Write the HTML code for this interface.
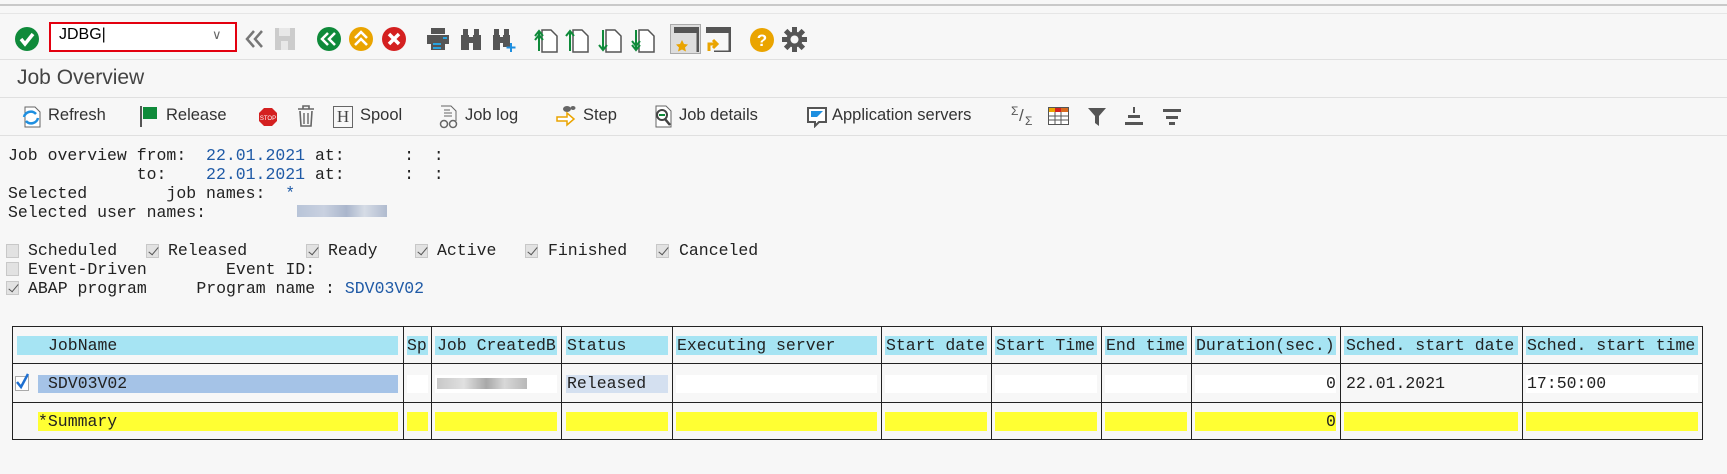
<!DOCTYPE html>
<html><head><meta charset="utf-8"><style>
body{margin:0;width:1727px;height:474px;background:#f7f7f7;position:relative;overflow:hidden;font-family:"Liberation Sans",sans-serif}
.a{position:absolute}
.m{position:absolute;font-family:"Liberation Mono",monospace;font-size:16.5px;color:#222;white-space:pre;line-height:19px}
.b{color:#1f5aa6}
.t{position:absolute;font-size:16.5px;color:#333;top:106px;white-space:nowrap}
.cb{position:absolute;width:13px;height:14px;background:#e2e2e2;border:1px solid #c8c8c8;box-sizing:border-box}
.ck::after{content:"";position:absolute;left:4px;top:0px;width:4px;height:9px;border:solid #555;border-width:0 1.5px 1.5px 0;transform:rotate(40deg)}
.vl{position:absolute;top:326px;width:1px;height:114px;background:#222}
.hl{position:absolute;left:12px;width:1691px;height:1px;background:#222}
.h{position:absolute;top:336px;height:19px;background:#a6e4f3}
.w{position:absolute;top:375px;height:18px;background:#fff}
.y{position:absolute;top:412px;height:19px;background:#ffff33}
</style></head><body>
<div class="a" style="left:0;top:4px;width:1727px;height:2px;background:#c9c9c9"></div>
<div class="a" style="left:0;top:13px;width:1727px;height:1px;background:#e6e6e6"></div>
<!-- toolbar 1 -->
<svg class="a" style="left:14px;top:26px" width="26" height="26"><circle cx="13" cy="13" r="12" fill="#0f8a3a"/><path d="M7 13l4 5 8-10" stroke="#fff" stroke-width="3.5" fill="none"/></svg>
<div class="a" style="left:49px;top:22px;width:184px;height:26px;border:2px solid #e3000f;background:#fff"></div>
<div class="a" style="left:59px;top:26px;font-size:16px;color:#000">JDBG<span style="font-weight:100">|</span></div>
<div class="a" style="left:212px;top:27px;font-size:13px;color:#666">&#8744;</div>
<svg class="a" style="left:244px;top:29px" width="22" height="20"><path d="M10 2l-7 8 7 8M18 2l-7 8 7 8" stroke="#777" stroke-width="2.5" fill="none"/></svg>
<svg class="a" style="left:274px;top:27px" width="22" height="24"><rect x="1" y="1" width="20" height="22" fill="#ccc"/><rect x="5" y="1" width="11" height="8" fill="#e8e8e8"/><rect x="7" y="14" width="7" height="9" fill="#e8e8e8"/></svg>
<svg class="a" style="left:316px;top:26px" width="26" height="26"><circle cx="13" cy="13" r="12" fill="#0f8a3a"/><path d="M12 7l-6 6 6 6M19 7l-6 6 6 6" stroke="#fff" stroke-width="2.5" fill="none"/></svg>
<svg class="a" style="left:348px;top:26px" width="26" height="26"><circle cx="13" cy="13" r="12" fill="#eaa400"/><path d="M7 12l6-6 6 6M7 19l6-6 6 6" stroke="#fff" stroke-width="2.5" fill="none"/></svg>
<svg class="a" style="left:381px;top:26px" width="26" height="26"><circle cx="13" cy="13" r="12" fill="#d42020"/><path d="M8 8l10 10M18 8L8 18" stroke="#fff" stroke-width="3.5"/></svg>
<svg class="a" style="left:426px;top:27px" width="24" height="24"><rect x="5" y="1" width="14" height="6" fill="#555"/><rect x="1" y="8" width="22" height="9" fill="#555"/><rect x="5" y="14" width="14" height="9" fill="#555"/><rect x="7" y="16" width="8" height="2" fill="#29a3e0"/><rect x="7" y="20" width="8" height="2" fill="#29a3e0"/><rect x="17" y="10" width="4" height="2" fill="#29a3e0"/></svg>
<svg class="a" style="left:459px;top:27px" width="24" height="24"><path d="M2 8h8v15H2zM14 8h8v15h-8zM4 2h5v6H4zM15 2h5v6h-5zM9 10h6v6H9z" fill="#555"/></svg>
<svg class="a" style="left:491px;top:27px" width="26" height="26"><path d="M2 8h7v15H2zM12 8h7v12h-7zM3 2h5v6H3zM13 2h5v6h-5zM8 10h5v6H8z" fill="#555"/><path d="M20 16v9M15.5 20.5h9" stroke="#1e8fe0" stroke-width="2"/></svg>
<svg class="a" style="left:534px;top:27px" width="25" height="26"><path d="M8 3h9l6 6v16H8z" fill="#fff" stroke="#555" stroke-width="1.5"/><path d="M5 24V5M1 9l4-5 4 5M1 13l4-5 4 5" stroke="#0f8a3a" stroke-width="2" fill="none"/></svg>
<svg class="a" style="left:565px;top:27px" width="25" height="26"><path d="M8 3h9l6 6v16H8z" fill="#fff" stroke="#555" stroke-width="1.5"/><path d="M5 24V4M1 9l4-5 4 5" stroke="#0f8a3a" stroke-width="2" fill="none"/></svg>
<svg class="a" style="left:598px;top:27px" width="25" height="26"><path d="M8 3h9l6 6v16H8z" fill="#fff" stroke="#555" stroke-width="1.5"/><path d="M5 3v20M1 18l4 5 4-5" stroke="#0f8a3a" stroke-width="2" fill="none"/></svg>
<svg class="a" style="left:631px;top:27px" width="25" height="26"><path d="M8 3h9l6 6v16H8z" fill="#fff" stroke="#555" stroke-width="1.5"/><path d="M5 3v20M1 14l4 5 4-5M1 18l4 5 4-5" stroke="#0f8a3a" stroke-width="2" fill="none"/></svg>
<div class="a" style="left:670px;top:24px;width:31px;height:30px;background:#ddd;border:1px solid #aaa;box-sizing:border-box"></div>
<svg class="a" style="left:673px;top:27px" width="26" height="25"><path d="M1 1h24v24" stroke="#555" stroke-width="3" fill="none"/><rect x="1" y="1" width="24" height="5" fill="#555"/><path d="M9 13l2 4 4 .5-3 3 1 4-4-2-4 2 1-4-3-3 4-.5z" fill="#eaa400"/></svg>
<svg class="a" style="left:705px;top:27px" width="26" height="25"><path d="M1 1h24v24H9" stroke="#555" stroke-width="3" fill="none"/><rect x="1" y="1" width="24" height="5" fill="#555"/><path d="M4 24v-7h8M8 13l4 4-4 4" stroke="#eaa400" stroke-width="3" fill="none"/></svg>
<svg class="a" style="left:749px;top:27px" width="26" height="26"><circle cx="13" cy="13" r="12" fill="#eaa400"/><text x="13" y="19" text-anchor="middle" font-family="Liberation Sans" font-weight="bold" font-size="17" fill="#fff">?</text></svg>
<svg class="a" style="left:782px;top:27px" width="25" height="25"><g fill="#555"><circle cx="12.5" cy="12.5" r="8"/><rect x="10" y="0" width="5" height="25"/><rect x="0" y="10" width="25" height="5"/><rect x="10" y="0" width="5" height="25" transform="rotate(45 12.5 12.5)"/><rect x="10" y="0" width="5" height="25" transform="rotate(-45 12.5 12.5)"/></g><circle cx="12.5" cy="12.5" r="4" fill="#f7f7f7"/></svg>
<div class="a" style="left:0;top:59px;width:1727px;height:1px;background:#e0e0e0"></div>
<div class="a" style="left:17px;top:66px;font-size:21px;color:#444">Job Overview</div>
<div class="a" style="left:0;top:97px;width:1727px;height:1px;background:#e0e0e0"></div>
<!-- toolbar 2 -->
<svg class="a" style="left:20px;top:106px" width="22" height="22"><path d="M5 1h10l5 5v15H5z" fill="#fff" stroke="#666"/><path d="M4 11a7 7 0 0 1 12-3M18 12a7 7 0 0 1-12 3" stroke="#1e8fe0" stroke-width="2.5" fill="none"/></svg>
<div class="t" style="left:48px">Refresh</div>
<svg class="a" style="left:139px;top:105px" width="20" height="22"><rect x="1" y="1" width="2" height="21" fill="#555"/><rect x="4" y="2" width="14" height="12" fill="#0f8a3a"/></svg>
<div class="t" style="left:166px">Release</div>
<svg class="a" style="left:258px;top:107px" width="20" height="20"><polygon points="6,1 14,1 19,6 19,14 14,19 6,19 1,14 1,6" fill="#d42020"/><text x="10" y="13" text-anchor="middle" font-size="6" fill="#fff" font-family="Liberation Sans">STOP</text></svg>
<svg class="a" style="left:296px;top:105px" width="20" height="22"><path d="M2 4h16M7 4V1h6v3M4 6l1 15h10l1-15" stroke="#666" stroke-width="1.6" fill="none"/><path d="M8 8v11M12 8v11" stroke="#666" stroke-width="1.4"/></svg>
<div class="a" style="left:333px;top:106px;width:18px;height:20px;border:1px solid #666;font-family:'Liberation Serif',serif;font-size:17px;color:#444;text-align:center;line-height:20px">H</div>
<div class="t" style="left:360px">Spool</div>
<svg class="a" style="left:438px;top:105px" width="22" height="24"><path d="M3 1h10l5 5v10" fill="none" stroke="#666"/><path d="M6 5h6M6 8h8M6 11h8" stroke="#666"/><circle cx="6" cy="19" r="3.5" fill="none" stroke="#666" stroke-width="1.5"/><circle cx="15" cy="19" r="3.5" fill="none" stroke="#666" stroke-width="1.5"/></svg>
<div class="t" style="left:465px">Job log</div>
<svg class="a" style="left:555px;top:105px" width="24" height="22"><ellipse cx="12" cy="4" rx="4" ry="3" fill="#666"/><ellipse cx="18" cy="3" rx="2.5" ry="2" fill="#666"/><path d="M2 12h10V8l7 6-7 6v-4H2z" fill="#fff" stroke="#eaa400" stroke-width="1.5"/></svg>
<div class="t" style="left:583px">Step</div>
<svg class="a" style="left:653px;top:105px" width="22" height="24"><path d="M3 1h10l5 5v16H3z" fill="#fff" stroke="#666"/><circle cx="9" cy="10" r="5" fill="none" stroke="#444" stroke-width="2"/><path d="M6 10h6" stroke="#0f8a3a" stroke-width="2"/><path d="M12 14l5 6" stroke="#444" stroke-width="2.5"/></svg>
<div class="t" style="left:679px">Job details</div>
<svg class="a" style="left:806px;top:106px" width="22" height="22"><path d="M2 2h18v14h-7l-4 4v-4H2z" fill="#fff" stroke="#555" stroke-width="2"/><path d="M5 5h12l-6 6H5z" fill="#1e8fe0"/></svg>
<div class="t" style="left:832px">Application servers</div>
<div class="a" style="left:1011px;top:104px;font-size:12px;color:#555">&Sigma;</div><div class="a" style="left:1019px;top:106px;font-size:17px;color:#555">/</div><div class="a" style="left:1025px;top:114px;font-size:12px;color:#555">&Sigma;</div>
<svg class="a" style="left:1048px;top:107px" width="21" height="18"><rect x="0.5" y="0.5" width="20" height="17" fill="#fff" stroke="#555"/><rect x="1" y="1" width="6" height="4" fill="#eaa400"/><rect x="7" y="1" width="6" height="4" fill="#d42020"/><rect x="13" y="1" width="7" height="4" fill="#d86a20"/><path d="M1 9h19M1 13h19M7 5v12M13 5v12" stroke="#555"/></svg>
<svg class="a" style="left:1087px;top:107px" width="20" height="20"><path d="M1 1h18l-7 8v10l-4-3V9z" fill="#555"/></svg>
<svg class="a" style="left:1124px;top:106px" width="20" height="20"><path d="M9 1h2v6H9zM4 9h12v3H4zM1 16h18v3H1z" fill="#555"/></svg>
<svg class="a" style="left:1162px;top:106px" width="20" height="20"><path d="M1 3h18v3H1zM4 10h12v3H4zM7 16h6v3H7z" fill="#555"/></svg>
<div class="a" style="left:0;top:135px;width:1727px;height:1px;background:#e0e0e0"></div>
<!-- info -->
<div class="m" style="left:8px;top:146px">Job overview from:  <span class="b">22.01.2021</span> at:      :  :</div>
<div class="m" style="left:8px;top:165px">             to:    <span class="b">22.01.2021</span> at:      :  :</div>
<div class="m" style="left:8px;top:184px">Selected        job names:  <span class="b">*</span></div>
<div class="m" style="left:8px;top:203px">Selected user names:</div>
<div class="a" style="left:297px;top:205px;width:90px;height:12px;background:linear-gradient(90deg,#b8c4d8,#c9d1e0 30%,#aab6cc 55%,#d6dce6 75%,#b0bbcf)"></div>
<div class="cb" style="left:6px;top:244px"></div><div class="m" style="left:28px;top:241px">Scheduled</div>
<div class="cb ck" style="left:146px;top:244px"></div><div class="m" style="left:168px;top:241px">Released</div>
<div class="cb ck" style="left:306px;top:244px"></div><div class="m" style="left:328px;top:241px">Ready</div>
<div class="cb ck" style="left:415px;top:244px"></div><div class="m" style="left:437px;top:241px">Active</div>
<div class="cb ck" style="left:525px;top:244px"></div><div class="m" style="left:548px;top:241px">Finished</div>
<div class="cb ck" style="left:656px;top:244px"></div><div class="m" style="left:679px;top:241px">Canceled</div>
<div class="cb" style="left:6px;top:262px"></div><div class="m" style="left:28px;top:260px">Event-Driven        Event ID:</div>
<div class="cb ck" style="left:6px;top:281px"></div><div class="m" style="left:28px;top:279px">ABAP program     Program name : <span class="b">SDV03V02</span></div>
<!-- table -->
<div class="hl" style="top:326px"></div><div class="hl" style="top:363px"></div><div class="hl" style="top:402px"></div><div class="hl" style="top:439px"></div>
<div class="vl" style="left:12px"></div><div class="vl" style="left:403px"></div><div class="vl" style="left:431px"></div><div class="vl" style="left:561px"></div><div class="vl" style="left:672px"></div><div class="vl" style="left:881px"></div><div class="vl" style="left:991px"></div><div class="vl" style="left:1101px"></div><div class="vl" style="left:1191px"></div><div class="vl" style="left:1340px"></div><div class="vl" style="left:1522px"></div><div class="vl" style="left:1702px"></div>
<div class="h" style="left:17px;width:381px"></div><div class="m" style="left:48px;top:336px">JobName</div>
<div class="h" style="left:407px;width:21px"></div><div class="m" style="left:407px;top:336px">Sp</div>
<div class="h" style="left:435px;width:122px"></div><div class="m" style="left:437px;top:336px">Job CreatedB</div>
<div class="h" style="left:566px;width:102px"></div><div class="m" style="left:567px;top:336px">Status</div>
<div class="h" style="left:676px;width:201px"></div><div class="m" style="left:677px;top:336px">Executing server</div>
<div class="h" style="left:885px;width:102px"></div><div class="m" style="left:886px;top:336px">Start date</div>
<div class="h" style="left:995px;width:102px"></div><div class="m" style="left:996px;top:336px">Start Time</div>
<div class="h" style="left:1105px;width:82px"></div><div class="m" style="left:1106px;top:336px">End time</div>
<div class="h" style="left:1195px;width:141px"></div><div class="m" style="left:1196px;top:336px">Duration(sec.)</div>
<div class="h" style="left:1344px;width:174px"></div><div class="m" style="left:1346px;top:336px">Sched. start date</div>
<div class="h" style="left:1526px;width:172px"></div><div class="m" style="left:1527px;top:336px">Sched. start time</div>
<div class="a" style="left:15px;top:376px;width:12px;height:13px;background:#fff;border:1px solid #aaa"></div>
<svg class="a" style="left:14px;top:373px" width="16" height="17"><path d="M3 9l4 5 7-13" stroke="#1e6fd0" stroke-width="2.5" fill="none"/></svg>
<div class="a" style="left:38px;top:375px;width:360px;height:18px;background:#a5c3e7"></div><div class="m" style="left:48px;top:374px">SDV03V02</div>
<div class="w" style="left:407px;width:21px"></div>
<div class="w" style="left:435px;width:122px"></div>
<div class="a" style="left:437px;top:378px;width:90px;height:11px;background:linear-gradient(90deg,#c8c8c8,#e0e0e0 30%,#a8a8a8 55%,#d8d8d8 75%,#b8b8b8)"></div>
<div class="a" style="left:566px;top:375px;width:102px;height:18px;background:#d4e0f0"></div><div class="m" style="left:567px;top:374px">Released</div>
<div class="w" style="left:676px;width:201px"></div>
<div class="w" style="left:885px;width:102px"></div>
<div class="w" style="left:995px;width:102px"></div>
<div class="w" style="left:1105px;width:82px"></div>
<div class="w" style="left:1195px;width:141px"></div><div class="m" style="left:1326px;top:374px">0</div>
<div class="m" style="left:1346px;top:374px">22.01.2021</div>
<div class="w" style="left:1526px;width:172px"></div><div class="m" style="left:1527px;top:374px">17:50:00</div>
<div class="y" style="left:38px;width:360px"></div><div class="m" style="left:38px;top:412px">*Summary</div>
<div class="y" style="left:407px;width:21px"></div>
<div class="y" style="left:435px;width:122px"></div>
<div class="y" style="left:566px;width:102px"></div>
<div class="y" style="left:676px;width:201px"></div>
<div class="y" style="left:885px;width:102px"></div>
<div class="y" style="left:995px;width:102px"></div>
<div class="y" style="left:1105px;width:82px"></div>
<div class="y" style="left:1195px;width:141px"></div><div class="m" style="left:1326px;top:412px">0</div>
<div class="y" style="left:1344px;width:174px"></div>
<div class="y" style="left:1526px;width:172px"></div>
</body></html>
